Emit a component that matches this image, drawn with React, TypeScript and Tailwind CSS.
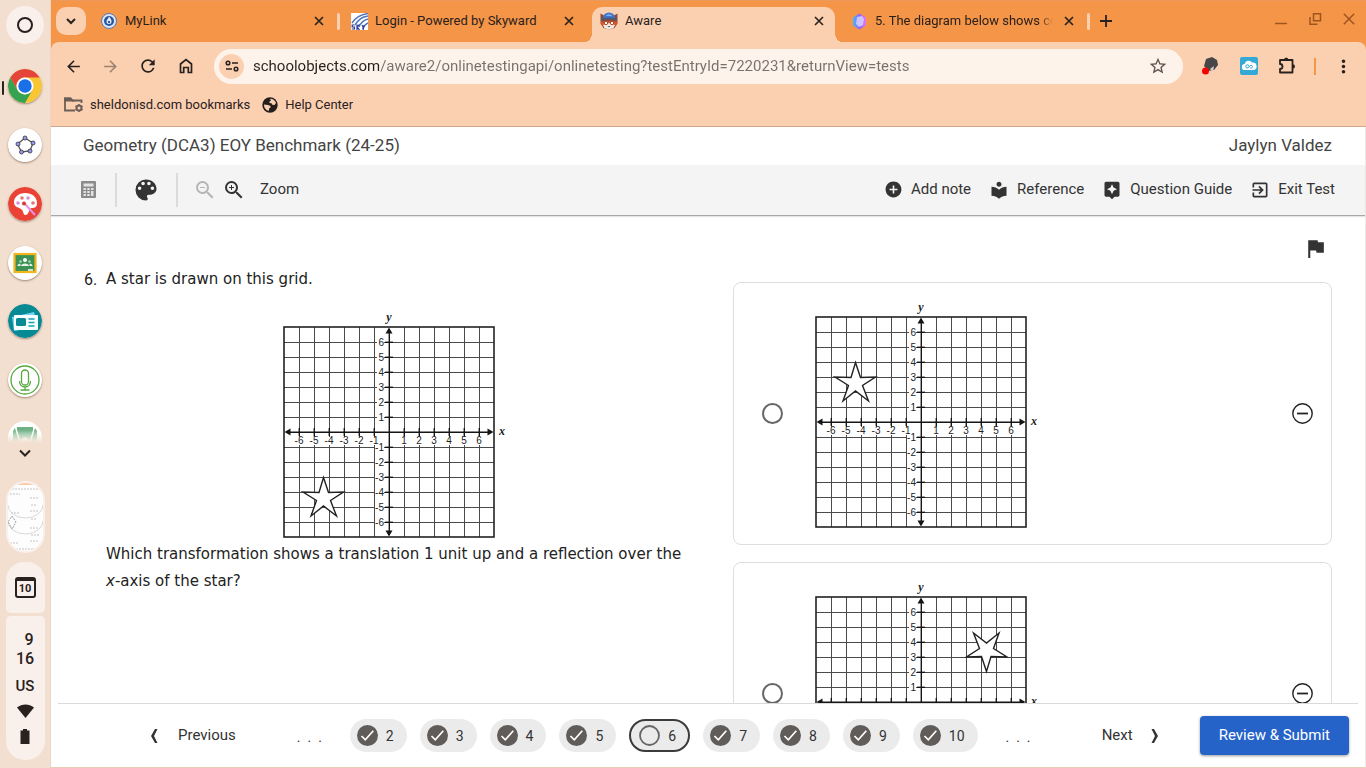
import React from "react";
import {
  MdAddCircle,
  MdArrowBack,
  MdArrowForward,
  MdAssistant,
  MdColorLens,
  MdExitToApp,
  MdFlag,
  MdLocalLibrary,
  MdMoreVert,
  MdRefresh,
  MdStarBorder,
  MdZoomIn,
  MdZoomOut,
} from "react-icons/md";

const STEPS = [-6, -5, -4, -3, -2, -1, 1, 2, 3, 4, 5, 6];
const STAR = "M-65.5 45.5L-60.5 60.5L-45.5 60L-58.5 68.5L-52.5 84L-65.5 74L-78 84L-72.5 68.5L-86 60L-70 60.5Z";

function CoordinateGrid({ starTransform }: { starTransform?: string }) {
  return (
    <svg width="235" height="235" viewBox="-106 -126 235 235" className="block shrink-0" role="img" aria-label="Star on a coordinate grid">
      <g stroke="#4a4a4a" strokeWidth="1">
        {STEPS.map((n) => (
          <React.Fragment key={n}>
            <line x1={n * 15 + 0.5} x2={n * 15 + 0.5} y1="-105" y2="105" />
            <line y1={n * 15 + 0.5} y2={n * 15 + 0.5} x1="-105" x2="105" />
          </React.Fragment>
        ))}
      </g>
      <rect x="-105" y="-105" width="210" height="210" fill="none" stroke="#222" strokeWidth="1.6" />
      {STEPS.map((n) => (
        <React.Fragment key={n}>
          <rect x={n > 0 ? -12 : -14} y={-n * 15 - 4} width={n > 0 ? 7 : 9} height="8" fill="#fff" />
          <rect x={n * 15 - (n > 0 ? 3 : 5)} y="5" width={n > 0 ? 7 : 9} height="8" fill="#fff" />
        </React.Fragment>
      ))}
      <g stroke="#151515" strokeWidth="1.4">
        <line x1="-102" x2="102" y1="0.3" y2="0.3" />
        <line y1="-102" y2="102" x1="0.3" x2="0.3" />
        {STEPS.map((n) => (
          <React.Fragment key={n}>
            <line x1={n * 15 + 0.3} x2={n * 15 + 0.3} y1="-4" y2="4" />
            <line y1={n * 15 + 0.3} y2={n * 15 + 0.3} x1="-4" x2="4" />
          </React.Fragment>
        ))}
      </g>
      <path d="M-104.500 0l6-3.500v7zM104.500 0l-6-3.500v7zM0-104.500l-3.500 6h7zM0 104.500l-3.500-6h7z" fill="#151515" />
      <g fontSize="10" fontFamily="'Liberation Sans', sans-serif" fill="#222">
        {STEPS.map((n) => (
          <React.Fragment key={n}>
            <text x="-5" y={-n * 15 + 4} textAnchor="end">{n}</text>
            <text x={n * 15} y="12" textAnchor="middle">{n}</text>
          </React.Fragment>
        ))}
      </g>
      <g fontSize="12" fontWeight="bold" fontStyle="italic" fontFamily="'Liberation Serif', serif" fill="#222">
        <text x="0" y="-111" textAnchor="middle">y</text>
        <text x="110" y="3">x</text>
      </g>
      <path d={STAR} transform={starTransform} fill="#fff" stroke="#222" strokeWidth="1.4" />
    </svg>
  );
}

function CloseGlyph() {
  return (
    <svg width="16" height="16" viewBox="0 0 16 16" stroke="#2b2320" strokeWidth="1.7">
      <path d="M4 4l8 8M12 4l-8 8" />
    </svg>
  );
}

const favicons: Record<string, React.ReactNode> = {
  mylink: (
    <svg width="16" height="16" viewBox="0 0 16 16">
      <circle cx="8" cy="8" r="7.500" fill="#dbe6f5" stroke="#5577b5" />
      <circle cx="8" cy="8" r="5" fill="#2a559f" />
      <path d="M8 3.500c2 2.500 2.500 3.500 2.500 5a2.500 2.500 0 0 1-5 0c0-1.500 1.500-2 2.500-5z" fill="#eef4ff" />
      <circle cx="8" cy="9" r="1.200" fill="#2a559f" />
    </svg>
  ),
  skyward: (
    <svg width="17" height="17" viewBox="0 0 17 17">
      <path d="M0 0h17v17H0z" fill="#fff" />
      <path d="M1 10C5 4 9 2 17 .5M4 12C8 6 11 4 17 3M8 14C10 9 13 7 17 6M12 16c1-4 3-5 5-6" fill="none" stroke="#4f74bf" strokeWidth="1.500" />
      <path d="M3.500 12H1.200v2h2.300v2H.8M6 11.500V17M6 14l2.500-2.500M6 14l2.500 3M11 12l1.200 2 1.200-2M12.200 14v3" fill="none" stroke="#2a3b94" strokeWidth="1.200" />
    </svg>
  ),
  aware: (
    <svg width="18" height="18" viewBox="0 0 18 18">
      <path d="M.5 1.500L5 4h8l4.500-2.500v10L14.500 16 9 17.500 3.500 16 .5 11.500z" fill="#8d4a36" />
      <path d="M1 9.500h16v3l-3 2H4l-3-2z" fill="#d9552c" />
      <path d="M3 13l6-2 6 2-1.500 3L9 17.500 4.500 16z" fill="#f1e9e2" />
      <path d="M3 6a6 5.500 0 0 1 12 0z" fill="#3f78cc" />
      <path d="M6 4c1-2 5-2 6 0z" fill="#84b5f0" />
      <path d="M1 6.500c5-1.500 11-1.500 16 0v2c-5-1.500-11-1.500-16 0z" fill="#4a5a78" />
      <circle cx="6" cy="11" r="1.700" fill="#fff" stroke="#b54525" />
      <circle cx="12" cy="11" r="1.700" fill="#fff" stroke="#b54525" />
      <path d="M7.500 14h3L9 15.500z" fill="#6b5f5a" />
    </svg>
  ),
  brain: (
    <svg width="17" height="17" viewBox="0 0 17 17">
      <defs>
        <linearGradient id="gem" x1="0" x2="1">
          <stop offset="0" stopColor="#42b8ff" />
          <stop offset="0.500" stopColor="#8d65ff" />
          <stop offset="1" stopColor="#e778e8" />
        </linearGradient>
      </defs>
      <path d="M8.500.5l6.500 4v8l-6.500 4-6.500-4v-8z" fill="url(#gem)" />
      <path d="M6 4l5-1 2 3-1 6-4 2-3-3z" fill="#d9d2ff" opacity=".85" />
    </svg>
  ),
};

function Tab({ icon, title, active, divider, fade }: { icon: string; title: string; active?: boolean; divider?: boolean; fade?: boolean }) {
  return (
    <div className="relative flex w-[250px] min-w-0 items-start pl-[2px] pr-[5px] pt-[6px]">
      <div className={`relative flex h-9 w-full items-center rounded-t-[10px] pb-2 pl-2 pr-2 ${active ? "bg-[#fbd0b1]" : ""}`}>
        {active && (
          <>
            <span className="absolute -left-[10px] bottom-0 size-[10px] bg-[radial-gradient(circle_at_top_left,transparent_10px,#fbd0b1_10px)]" />
            <span className="absolute -right-[10px] bottom-0 size-[10px] bg-[radial-gradient(circle_at_top_right,transparent_10px,#fbd0b1_10px)]" />
          </>
        )}
        <span className="flex w-[18px] shrink-0 justify-center">{favicons[icon]}</span>
        <button
          className={`ml-[7px] min-w-0 flex-1 overflow-hidden whitespace-nowrap text-left text-[13px] leading-4 ${fade ? "mask-r-from-92% mask-r-to-100%" : ""}`}
        >
          {title}
        </button>
        <button aria-label={`Close ${title}`} className="ml-2 shrink-0">
          <CloseGlyph />
        </button>
      </div>
      {divider && <span className="absolute right-0 top-3 h-[17px] w-[3px] rounded bg-[#fbd0b1]" />}
    </div>
  );
}

function Browser() {
  return (
    <header className="shrink-0 bg-[#f59547] text-[#29211d]">
      <div className="flex h-[42px] border-t border-[#eb9a5c]">
        <button aria-label="Search tabs" className="ml-[5px] mt-1.5 flex h-7 w-[30px] shrink-0 items-center justify-center rounded-[10px] bg-[#fbd0b1]">
          <svg width="10" height="8" viewBox="0 0 10 8" fill="none" stroke="#29211d" strokeWidth="2">
            <path d="M1 2l4 4 4-4" />
          </svg>
        </button>
        <div className="ml-1 flex min-w-0">
          <Tab icon="mylink" title="MyLink" divider />
          <Tab icon="skyward" title="Login - Powered by Skyward" />
          <Tab icon="aware" title="Aware" active />
          <Tab icon="brain" title="5. The diagram below shows concentric" divider fade />
        </div>
        <button aria-label="New tab" className="mb-0.5 ml-2.5">
          <svg width="12" height="12" viewBox="0 0 12 12" stroke="#29211d" strokeWidth="1.800">
            <path d="M6 0v12M0 6h12" />
          </svg>
        </button>
        <div className="ml-auto mr-[11px] flex items-center gap-[21px] pb-1.5 text-[#9c5420]">
          <button aria-label="Minimize">
            <svg width="13" height="12" viewBox="0 0 13 12" stroke="currentColor" strokeWidth="1.500"><path d="M0 10.500h12" /></svg>
          </button>
          <button aria-label="Restore">
            <svg width="13" height="12" viewBox="0 0 13 12" fill="none" stroke="currentColor" strokeWidth="1.500"><path d="M4.500.8h7v7h-7zM1 4v7.200h7.500" /></svg>
          </button>
          <button aria-label="Close window">
            <svg width="12" height="12" viewBox="0 0 12 12" stroke="currentColor" strokeWidth="1.500"><path d="M.8.8l10.400 10.400M11.200.8L.8 11.200" /></svg>
          </button>
        </div>
      </div>
      <div className="rounded-t-lg border-b border-[#cfa68b] bg-[#fbd0b1]">
        <div className="flex h-12 items-center pl-[13px] pr-3">
          <button aria-label="Back"><MdArrowBack size={19} /></button>
          <button aria-label="Forward" className="ml-[18px] text-[#9d8271]"><MdArrowForward size={19} /></button>
          <button aria-label="Reload" className="ml-[18px]"><MdRefresh size={20} /></button>
          <button aria-label="Home" className="ml-[21px]">
            <svg width="14" height="16" viewBox="0 0 14 16" fill="none" stroke="currentColor" strokeWidth="1.700">
              <path d="M1.500 6L7 1.500 12.500 6v8.500H9.300V9.500H4.700v5H1.500z" />
            </svg>
          </button>
          <div className="ml-[21px] flex h-[35px] min-w-0 flex-1 items-center rounded-full bg-[#fef3eb] pl-[5px] pr-[15px]">
            <button aria-label="Site information" className="flex size-[25px] shrink-0 items-center justify-center rounded-full bg-[#fbd0b1]">
              <svg width="14" height="12" viewBox="0 0 14 12" fill="none" stroke="currentColor" strokeWidth="1.500">
                <circle cx="3" cy="3" r="1.800" />
                <path d="M7 3h6M1 9h6" />
                <circle cx="11" cy="9" r="1.800" />
              </svg>
            </button>
            <input
              aria-label="Address"
              readOnly
              value="schoolobjects.com/aware2/onlinetestingapi/onlinetesting?testEntryId=7220231&returnView=tests"
              className="ml-[9px] min-w-0 flex-1 bg-[linear-gradient(to_right,#29211d_126px,#77706b_126px)] bg-clip-text text-[15px] text-transparent outline-none"
            />
            <button aria-label="Bookmark this page" className="text-[#5d544e]"><MdStarBorder size={20} /></button>
          </div>
          <button aria-label="Recorder extension" className="ml-[18px]">
            <svg width="18" height="18" viewBox="0 0 18 18">
              <path d="M5 2l6-2 5 3 1 5-4 5-6 1-4-5z" fill="#474747" />
              <path d="M9 12l4-3-1 6z" fill="#d9d0cb" />
              <circle cx="4.500" cy="14" r="3.500" fill="#f80000" />
            </svg>
          </button>
          <button aria-label="Cloud extension" className="ml-[21px]">
            <svg width="18" height="18" viewBox="0 0 18 18">
              <rect width="18" height="18" rx="2" fill="#34a9d6" />
              <path d="M5 13a3 3 0 0 1-.3-6A4 4 0 0 1 12 5.500 3.800 3.800 0 0 1 13.500 13z" fill="#fff" />
              <path d="M9 9.500a1.600 1.600 0 1 0-.8 1.300l1.800-2a1.400 1.400 0 1 1 .2 2" fill="none" stroke="#34a9d6" strokeWidth="1" />
            </svg>
          </button>
          <button aria-label="Extensions" className="ml-5">
            <svg width="18" height="18" viewBox="0 0 18 18">
              <path d="M2 3h12.500v12.500H2v-3.500a2.500 2.500 0 0 0 0-5z" fill="none" stroke="currentColor" strokeWidth="1.800" strokeLinejoin="round" />
              <path d="M6 3a2.200 2.500 0 0 1 4.400 0zM14.500 7.200a2.500 2.200 0 0 1 0 4.400z" fill="currentColor" />
            </svg>
          </button>
          <span className="ml-[18px] h-[17px] w-0.5 bg-[#f59547]" />
          <button aria-label="Menu" className="ml-[17px]"><MdMoreVert size={21} /></button>
        </div>
        <nav className="flex h-9 items-center gap-3 pb-1.5 pl-[13px] text-[13px]">
          <a href="#bookmarks" className="flex items-center gap-[7px]">
            <svg width="19" height="16" viewBox="0 0 19 16" fill="none" stroke="#6b5f58" strokeWidth="1.800">
              <path d="M11 13.500H1V1.500h5.500l2 2h9V6" />
              <path d="M1 1.500h5.500l2 2H1z" fill="#6b5f58" />
              <circle cx="15" cy="11" r="2.500" strokeWidth="2" />
              <path d="M15 7v1.500M15 13.500V15M11.500 9l1.300.8M17.200 12.200l1.300.8M11.500 13l1.300-.8M17.200 9.800l1.300-.8" strokeWidth="1.500" />
            </svg>
            sheldonisd.com bookmarks
          </a>
          <a href="#help" className="flex items-center gap-[7px]">
            <svg width="16" height="16" viewBox="0 0 16 16">
              <circle cx="8" cy="8" r="7.700" fill="#241f1d" />
              <path d="M8 1.800c3 0 5.300 1.800 6 4.200L12.500 8l-2.200-.3-.8-1.500L7.500 6V4.500L9 3.500zM2 7.500l4 .5 2.500 1v1.500L7 11.500v2.300C4 13.500 2 11 2 7.500z" fill="#fbd0b1" />
            </svg>
            Help Center
          </a>
        </nav>
      </div>
    </header>
  );
}

const disc = "size-[34px] rounded-full shadow-[0_1px_2px_rgba(80,50,30,.5)]";

function Shelf() {
  return (
    <aside className="flex w-[51px] shrink-0 flex-col items-center border-r border-[#e8d5c6] bg-[#f2dfd0] pb-2 text-[#29211d]">
      <button aria-label="Launcher" className="mt-1.5 flex size-[38px] items-center justify-center rounded-full bg-[#faf0eb]">
        <span className="size-4 rounded-full border-2 border-[#29211d]" />
      </button>
      <button aria-label="Chrome" className="relative mt-[25px]">
        <span className="absolute -left-[6px] top-3 h-[14px] w-0.5 rounded bg-[#29211d]" />
        <svg viewBox="0 0 34 34" className={disc}>
          <circle cx="17" cy="17" r="17" fill="#f9c633" />
          <path d="M2.280 8.500A17 17 0 0 1 31.720 8.500H17a8.500 8.500 0 0 0-7.360 12.750z" fill="#e5443a" />
          <path d="M2.280 8.500A17 17 0 0 0 17 34l7.360-12.750a8.500 8.500 0 0 1-14.720 0z" fill="#36a352" />
          <circle cx="17" cy="17" r="8.500" fill="#fff" />
          <circle cx="17" cy="17" r="6.700" fill="#1a70e8" />
        </svg>
      </button>
      <button aria-label="GeoGebra" className="mt-[25px]">
        <svg viewBox="0 0 34 34" className={disc}>
          <circle cx="17" cy="17" r="17" fill="#fff" />
          <path d="M17 10l8 5-3 8-8.500 1L9.500 16z" fill="none" stroke="#555" strokeWidth="1.300" />
          <g fill="#9999f5" stroke="#333" strokeWidth=".8">
            <circle cx="17" cy="10" r="2" /><circle cx="25" cy="15" r="2" /><circle cx="22" cy="23" r="2" /><circle cx="13.500" cy="24" r="2" /><circle cx="10" cy="16" r="2" />
          </g>
        </svg>
      </button>
      <button aria-label="Canvas" className="mt-[25px]">
        <svg viewBox="0 0 34 34" className={disc}>
          <circle cx="17" cy="17" r="17" fill="#ea4335" />
          <path d="M17 6c7 0 12 4 12 10 0 4-2 5-5 5-4 0-2 7-7 7-2 0-1-4-4-6s-7-2-7-7c0-5 5-9 11-9z" fill="#fff" />
          <g fill="#e77474"><circle cx="14" cy="11" r="1.800" /><circle cx="10" cy="16" r="1.800" fill="#d590db" /><circle cx="20" cy="11" r="1.800" fill="#d590db" /><circle cx="25" cy="16" r="1.800" /></g>
          <path d="M17 17l10 11" stroke="#e891ec" strokeWidth="2" />
          <circle cx="16" cy="16.500" r="2" fill="#d83a32" />
        </svg>
      </button>
      <button aria-label="Classroom" className="mt-[25px]">
        <svg viewBox="0 0 34 34" className={disc}>
          <circle cx="17" cy="17" r="17" fill="#fff" />
          <rect x="6.500" y="8" width="21" height="18" fill="#3c9254" stroke="#f2b51d" strokeWidth="2.200" />
          <circle cx="17" cy="14" r="2" fill="#fff" /><circle cx="12.500" cy="15.500" r="1.300" fill="#a9d4b3" /><circle cx="21.500" cy="15.500" r="1.300" fill="#a9d4b3" />
          <path d="M13 20c0-3.500 8-3.500 8 0zM9.500 20c0-2 2-2.500 3-2v2zM24.500 20c0-2-2-2.500-3-2v2z" fill="#e5f3e8" />
          <path d="M20 24h5" stroke="#fff" strokeWidth="1.500" />
        </svg>
      </button>
      <button aria-label="News" className="mt-6">
        <svg viewBox="0 0 34 34" className={disc}>
          <circle cx="17" cy="17" r="17" fill="#078a94" />
          <path d="M4 13l22-5 4 15-24 4z" fill="#70d5f1" />
          <rect x="6" y="11" width="24" height="15" rx="1" fill="#f7feff" />
          <rect x="8" y="14" width="10" height="8" rx="1.500" fill="#078a94" />
          <path d="M20.500 15h6M20.500 18.500h6M20.500 22h6" stroke="#13a3b3" strokeWidth="1.600" />
        </svg>
      </button>
      <button aria-label="Voice recorder" className="mt-[25px]">
        <svg viewBox="0 0 34 34" className={disc} fill="none" stroke="#55a93f" strokeWidth="1.300">
          <circle cx="17" cy="17" r="17" fill="#fff" stroke="none" />
          <circle cx="17" cy="17" r="14" />
          <rect x="13.500" y="7" width="7" height="15" rx="3.500" />
          <path d="M11.500 18c0 8 11 8 11 0M17 24v3M12.500 27h9" />
        </svg>
      </button>
      <button aria-label="More apps" className="mt-6 flex h-[38px] flex-col items-center">
        <svg width="34" height="22" viewBox="0 0 34 22" className="shrink-0">
          <defs>
            <linearGradient id="fade" x1="0" x2="0" y1="0" y2="1">
              <stop offset="0.550" stopColor="#fff" />
              <stop offset="1" stopColor="#fff" stopOpacity="0" />
            </linearGradient>
            <linearGradient id="green" x1="0" x2="0" y1="0" y2="1">
              <stop offset="0.200" stopColor="#6fb184" />
              <stop offset="1" stopColor="#9fc6a7" stopOpacity="0" />
            </linearGradient>
          </defs>
          <path d="M0 22V17a17 17 0 0 1 34 0v5z" fill="url(#fade)" />
          <path d="M9 6h16v3l-3 10-5-3-5 3L9 9zM5 10l2-3 4 14H5zM29 10l-2-3-4 14h6z" fill="url(#green)" />
        </svg>
        <svg width="12" height="8" viewBox="0 0 12 8" fill="none" stroke="#29211d" strokeWidth="2" className="mt-1.5 shrink-0"><path d="M1 1.500l5 5 5-5" /></svg>
      </button>
      <button aria-label="Recent files" className="mt-[22px]">
        <svg width="39" height="72" viewBox="0 0 39 72">
          <defs><clipPath id="pill"><rect x="2" y="2" width="35" height="68" rx="17.500" /></clipPath></defs>
          <rect width="39" height="72" rx="19.500" fill="#faf0eb" />
          <g clipPath="url(#pill)">
            <rect width="39" height="72" fill="#fdfdfd" />
            <path d="M0 0h39v4H0z" fill="#f8cba9" />
            <path d="M3 8h30M4 13h10M5 32h9M4 62h8M10 68h20M24 17h8M25 24h6M24 30h9M25 38h5M24 47h9M25 54h9M24 60h8" stroke="#c3c3c9" strokeDasharray="2 1" />
            <path d="M2 24a17.500 13 0 0 0 35 0M2 40a17.500 13 0 0 0 35 0" fill="none" stroke="#d8d8dc" />
            <path d="M6 35l4 6-4 7-4-7z" fill="none" stroke="#999ca5" strokeDasharray="2 1" />
          </g>
        </svg>
      </button>
      <button aria-label="Calendar" className="mt-[9px] flex h-[51px] w-[39px] shrink-0 items-center justify-center rounded-b-[5px] rounded-t-[18px] bg-[#faf0eb]">
        <span className="flex h-[21px] w-[21px] items-center justify-center rounded-[3px] border-2 border-t-4 border-[#29211d] text-[11px] font-bold leading-none">10</span>
      </button>
      <button aria-label="Status" className="mt-[3px] flex w-[39px] flex-1 flex-col items-center rounded-b-[19px] rounded-t-[5px] bg-[#faf0eb] pt-3.5 text-base font-medium leading-[19px]">
        <span className="w-[17px] text-right">9</span>
        <span>16</span>
        <span className="mt-[9px] text-[15px]">US</span>
        <svg width="17" height="14" viewBox="0 0 17 14" className="mt-2 shrink-0"><path d="M8.500 14L0 3.500c5-4 12-4 17 0z" fill="#29211d" /></svg>
        <svg width="10" height="15" viewBox="0 0 10 15" className="mt-[11px] shrink-0"><path d="M3 0h4v1.500h2.500V15h-9V1.500H3z" fill="#29211d" /></svg>
      </button>
    </aside>
  );
}

function CalculatorIcon() {
  return (
    <svg width="15" height="17" viewBox="0 0 15 17">
      <rect width="15" height="17" rx="1" fill="#8b8b8b" />
      <path d="M2.500 2.500h10v3h-10z" fill="#e2e2e2" />
      <path d="M2.500 7h2.500v2H2.500zM6.250 7h2.500v2h-2.500zM10 7h2.500v2H10zM2.500 10h2.500v2H2.500zM6.250 10h2.500v2h-2.500zM10 10h2.500v5H10zM2.500 13h2.500v2H2.500zM6.250 13h2.500v2h-2.500z" fill="#e2e2e2" />
    </svg>
  );
}

function TestToolbar() {
  return (
    <div className="flex h-[51px] shrink-0 items-center justify-between border-b border-[#a8a8a8] bg-[#f4f4f4] pb-px pl-[30px] pr-[30px] text-[15px] shadow-[0_1px_1px_rgba(0,0,0,.1)]">
      <div className="flex items-center">
        <button aria-label="Calculator"><CalculatorIcon /></button>
        <span className="ml-[19px] h-[34px] w-0.5 bg-[#dedad8]" />
        <button aria-label="Colors" className="ml-[15px]"><MdColorLens size={28} /></button>
        <span className="ml-4 h-[34px] w-0.5 bg-[#dedad8]" />
        <button aria-label="Zoom out" className="ml-[15px] text-[#b5b5b5]"><MdZoomOut size={24} /></button>
        <button aria-label="Zoom in" className="ml-[5px]"><MdZoomIn size={24} /></button>
        <span className="ml-3.5">Zoom</span>
      </div>
      <div className="flex items-center gap-[18px]">
        <button className="flex items-center gap-2"><MdAddCircle size={19} />Add note</button>
        <button className="flex items-center gap-2"><MdLocalLibrary size={20} />Reference</button>
        <button className="flex items-center gap-2"><MdAssistant size={20} />Question Guide</button>
        <button className="flex items-center gap-2"><MdExitToApp size={20} />Exit Test</button>
      </div>
    </div>
  );
}

function Option({ name, transform }: { name: string; transform: string }) {
  return (
    <div className="flex items-center rounded-lg border border-[#dedede] py-[13px] pl-7 pr-[18px]">
      <label className="flex items-center gap-8">
        <input type="radio" name="answer" aria-label={name} className="size-[21px] appearance-none rounded-full border-2 border-[#666] bg-white" />
        <CoordinateGrid starTransform={transform} />
      </label>
      <button aria-label={`Eliminate ${name}`} className="ml-auto">
        <svg width="21" height="21" viewBox="0 0 21 21" fill="none" stroke="#222" strokeWidth="1.400">
          <circle cx="10.500" cy="10.500" r="9.700" />
          <path d="M5 10.500h11" strokeWidth="1.800" />
        </svg>
      </button>
    </div>
  );
}

function QuestionPill({ n }: { n: number }) {
  const current = n === 6;
  return (
    <button
      aria-current={current ? "step" : undefined}
      className={`flex h-[33px] items-center gap-2 rounded-full bg-[#ebebeb] text-sm ${current ? "border-2 border-[#3b3b3b] pl-2 pr-3" : "pl-[7px] pr-[13px]"}`}
    >
      <svg width="21" height="21" viewBox="0 0 21 21" fill="none">
        {current ? (
          <circle cx="10.500" cy="10.500" r="9.500" stroke="#666" strokeWidth="1.800" />
        ) : (
          <>
            <circle cx="10.500" cy="10.500" r="10.500" fill="#605c59" />
            <path d="M4.500 11l3.800 3.800 8-9" stroke="#fff" strokeWidth="1.700" />
          </>
        )}
      </svg>
      {n}
    </button>
  );
}

function Chevron({ flip }: { flip?: boolean }) {
  return (
    <svg width="8" height="14" viewBox="0 0 8 14" fill="#333" className={flip ? "rotate-180" : ""}>
      <path d="M5 0h2.500L4 7l3.500 7H5L1 7z" />
    </svg>
  );
}

function Footer() {
  return (
    <footer className="mx-[7px] flex h-16 shrink-0 items-center justify-between border-t border-[#dadada] bg-white pl-[92px] pr-[9px] text-[15px]">
      <button className="flex items-center gap-5"><Chevron />Previous</button>
      <div className="mr-2.5 flex items-center gap-7">
        <span className="whitespace-pre pt-0.5 text-sm">.  .  .</span>
        <div className="flex items-center gap-[13px]">
          {[2, 3, 4, 5, 6, 7, 8, 9, 10].map((n) => <QuestionPill key={n} n={n} />)}
        </div>
        <span className="whitespace-pre pt-0.5 text-sm">.  .  .</span>
      </div>
      <div className="flex items-center gap-[41px]">
        <button className="flex items-center gap-[18px]">Next<Chevron flip /></button>
        <button className="h-[39px] rounded bg-[#2563c9] px-[19px] text-[15px] text-white shadow-[0_1px_3px_rgba(0,0,0,.4)]">Review &amp; Submit</button>
      </div>
    </footer>
  );
}

export default function App() {
  return (
    <div className="flex h-screen overflow-hidden font-[Roboto,sans-serif]">
      <Shelf />
      <div className="flex min-w-0 flex-1 flex-col">
        <Browser />
        <div className="flex min-h-0 flex-1 flex-col border-b border-r border-b-[#e9cbb6] border-r-[#eeeae7] bg-white text-[#333]">
          <div className="flex h-[38px] shrink-0 items-center justify-between pl-8 pr-[33px] text-[17px] text-[#444]">
            <h1>Geometry (DCA3) EOY Benchmark (24-25)</h1>
            <span>Jaylyn Valdez</span>
          </div>
          <TestToolbar />
          <main className="min-h-0 flex-1 overflow-hidden pl-[33px] pr-[33px]">
            <div className="flex h-[50px] items-end justify-end pb-[5px] pr-1">
              <button aria-label="Flag question"><MdFlag size={25} /></button>
            </div>
            <div className="grid grid-cols-2 gap-x-[50px] font-['DejaVu_Sans',sans-serif] text-[15px] leading-[27px] text-[#222]">
              <div className="flex">
                <span className="w-[22px] shrink-0 font-[Roboto,sans-serif] text-base leading-[27px]">6.</span>
                <div className="flex-1">
                  <p>A star is drawn on this grid.</p>
                  <div className="mt-[13px] flex justify-center pl-3"><CoordinateGrid /></div>
                  <p>Which transformation shows a translation 1 unit up and a reflection over the <i>x</i>-axis of the star?</p>
                </div>
              </div>
              <div className="flex flex-col gap-[17px] pt-4">
                <Option name="Option A" transform="translate(0 -105)" />
                <Option name="Option B" transform="rotate(180) translate(0 -15)" />
              </div>
            </div>
          </main>
          <Footer />
        </div>
      </div>
    </div>
  );
}
